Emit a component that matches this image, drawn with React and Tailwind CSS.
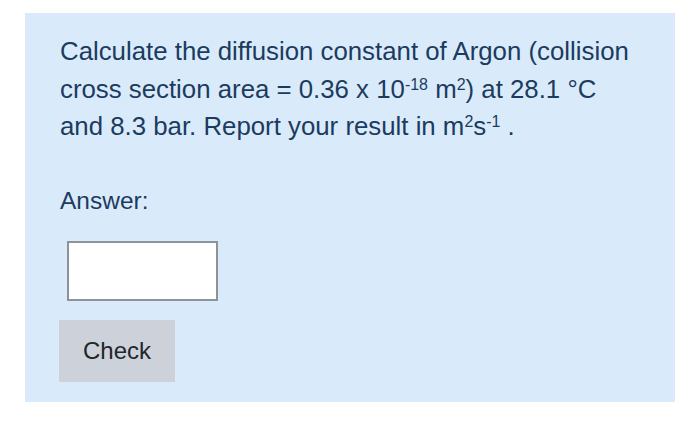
export default function App() {
    const sup = "text-[16px]";
    return (
        <div className="w-[700px] h-[427px] bg-white pt-[13px] pl-[25px]" style={{ fontFamily: '"Liberation Sans", Arial, sans-serif' }}>
            <div className="w-[650px] h-[389px] bg-[#d9ebfb] pl-[35px] pt-[20px] text-[#1c3b5e] flex flex-col items-start">
                <p className="text-[25.8px] leading-[37.5px]">
                    Calculate the diffusion constant of Argon (collision<br />
                    cross section area = 0.36 x 10<sup className={sup}>-18</sup> m<sup className={sup}>2</sup>) at 28.1 °C<br />
                    and 8.3 bar. Report your result in m<sup className={sup}>2</sup>s<sup className={sup}>-1</sup> .
                </p>
                <p className="mt-[36px] text-[24.5px] leading-[38px]">Answer:</p>
                <div className="flex flex-col items-start gap-[19px] mt-[21px]">
                    <input
                        type="text"
                        className="ml-[7px] w-[151px] h-[60px] bg-white border-2 border-[#8c9399] outline-none"
                    />
                    <button className="-ml-px w-[116px] h-[62px] bg-[#cdd2da] text-[#22262b] text-[24px]">
                        Check
                    </button>
                </div>
            </div>
        </div>
    );
}
